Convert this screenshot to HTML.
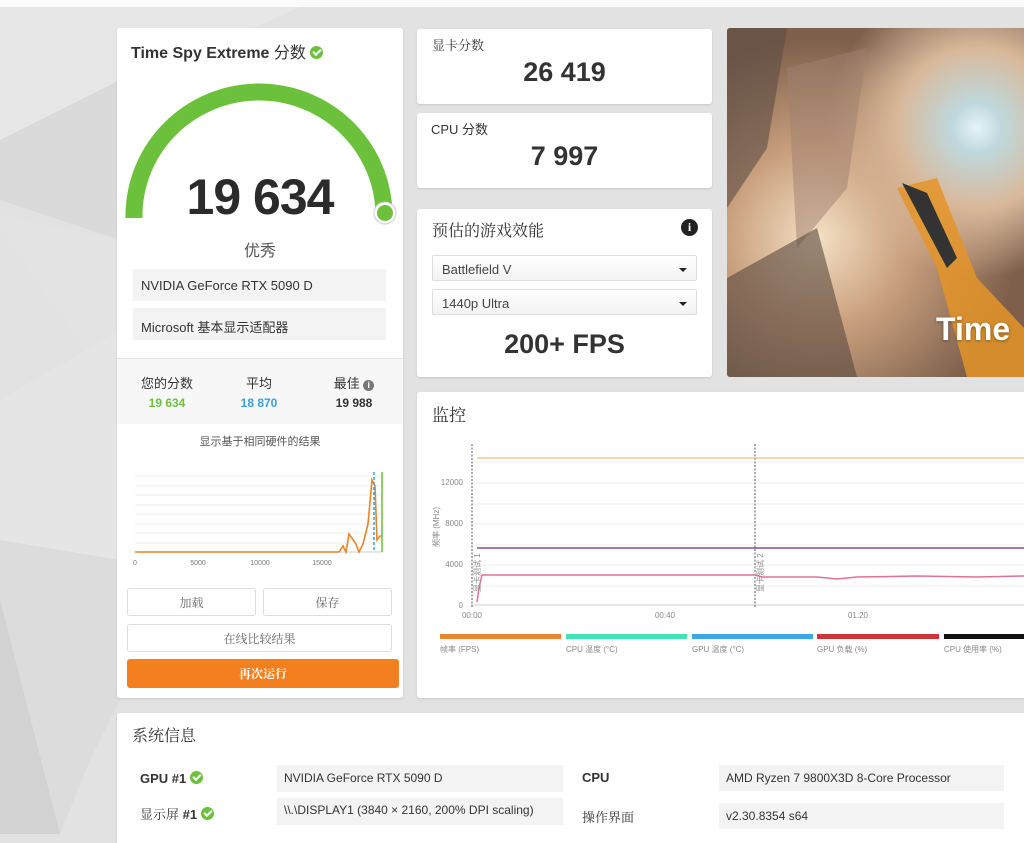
<!DOCTYPE html>
<html><head><meta charset="utf-8"><style>
*{margin:0;padding:0;box-sizing:border-box}
body{width:1024px;height:834px;overflow:hidden;background:#e2e2e2;font-family:"Liberation Sans","Noto Sans CJK SC",sans-serif;color:#333;position:relative}
.card{position:absolute;background:#fff;border-radius:3px;box-shadow:0 1px 2px rgba(0,0,0,.12)}
.abs{position:absolute}
.gray{background:#f3f3f3}
.btn{position:absolute;border:1px solid #ddd;border-radius:3px;background:#fff;text-align:center;font-size:12px;color:#666;font-family:"Noto Serif CJK SC",serif}
.sel{position:absolute;left:15px;width:265px;height:26px;border:1px solid #ddd;border-radius:2px;background:linear-gradient(#fff,#f2f2f2);font-size:13px;color:#444;padding:6px 0 0 9px}
.sel:after{content:"";position:absolute;right:9px;top:12px;border:4px solid transparent;border-top:4px solid #222;border-bottom:0}
.chk{display:inline-block;width:13px;height:13px;border-radius:50%;background:#6cc13c;vertical-align:-1px;position:relative}
.chk:after{content:"";position:absolute;left:3px;top:3px;width:6px;height:3px;border-left:2px solid #fff;border-bottom:2px solid #fff;transform:rotate(-45deg)}
</style></head><body>
<svg class="abs" style="left:0;top:0" width="1024" height="834">
<rect width="1024" height="7" fill="#fbfbfb"/>
<polygon points="0,7 300,7 0,140" fill="#e7e7e7"/>
<polygon points="0,140 120,80 120,240 0,200" fill="#dadada"/>
<polygon points="0,215 120,240 120,400 0,230" fill="#e3e3e3"/>
<polygon points="0,400 120,330 120,560 0,540" fill="#e5e5e5"/>
<polygon points="0,540 120,560 120,834 0,834" fill="#dcdcdc"/>
<polygon points="0,600 60,834 0,834" fill="#d2d2d2"/>
<polygon points="60,834 90,760 120,700 120,834" fill="#e2e2e2"/>
</svg>

<!-- Score card -->
<div class="card" style="left:117px;top:28px;width:286px;height:670px">
  <div class="abs" style="left:14px;top:11px;font-size:16px;font-weight:bold;color:#333">Time Spy Extreme <span style="font-weight:normal">分数</span> <span class="chk"></span></div>
  <svg class="abs" style="left:0;top:0" width="286" height="200">
    <path d="M17 190 A125 124 0 0 1 267 186" fill="none" stroke="#6cc13c" stroke-width="17"/>
    <circle cx="268" cy="185" r="11" fill="#fff" stroke="#ccc"/>
    <circle cx="268" cy="185" r="8" fill="#6cc13c"/>
  </svg>
  <div class="abs" style="left:0;width:286px;top:140px;text-align:center;font-size:50px;font-weight:bold;color:#2b2b2b;letter-spacing:-1px">19 634</div>
  <div class="abs" style="left:0;width:286px;top:209px;text-align:center;font-size:16px;color:#555">优秀</div>
  <div class="abs gray" style="left:16px;top:241px;width:253px;height:32px;font-size:13px;padding:9px 8px">NVIDIA GeForce RTX 5090 D</div>
  <div class="abs gray" style="left:16px;top:280px;width:253px;height:32px;font-size:13px;padding:9px 8px">Microsoft 基本显示适配器</div>
  <div class="abs" style="left:0;top:330px;width:286px;height:66px;background:#f7f7f7;border-top:1px solid #e5e5e5">
    <div class="abs" style="left:0;width:100px;top:14px;text-align:center;font-size:13px">您的分数<br><b style="color:#6cc13c;font-size:12px;line-height:22px">19 634</b></div>
    <div class="abs" style="left:92px;width:100px;top:14px;text-align:center;font-size:13px">平均<br><b style="color:#3aa0d8;font-size:12px;line-height:22px">18 870</b></div>
    <div class="abs" style="left:187px;width:100px;top:14px;text-align:center;font-size:13px">最佳 <span style="display:inline-block;width:11px;height:11px;border-radius:50%;background:#777;color:#fff;font-size:9px;line-height:11px;font-weight:bold">i</span><br><b style="font-size:12px;line-height:22px">19 988</b></div>
  </div>
  <div class="abs" style="left:0;width:286px;top:405px;text-align:center;font-size:11px;color:#555">显示基于相同硬件的结果</div>
  <svg class="abs" style="left:0;top:430px" width="286" height="120">
    <g stroke="#eee"><line x1="18" y1="18" x2="265" y2="18"/><line x1="18" y1="28" x2="265" y2="28"/><line x1="18" y1="37" x2="265" y2="37"/><line x1="18" y1="47" x2="265" y2="47"/><line x1="18" y1="56" x2="265" y2="56"/><line x1="18" y1="66" x2="265" y2="66"/><line x1="18" y1="75" x2="265" y2="75"/><line x1="18" y1="85" x2="265" y2="85"/></g>
    <line x1="18" y1="94" x2="265" y2="94" stroke="#ccc"/>
    <polyline points="18,94 222,94 226,88 229,94 232,76 239,86 242,94 246,86 251,66 255,22 258,28 260,82 263,78 265,78" fill="none" stroke="#e8842b" stroke-width="1.6"/>
    <line x1="257" y1="14" x2="257" y2="94" stroke="#3aa0d8" stroke-width="1.5" stroke-dasharray="3,2"/>
    <line x1="265" y1="14" x2="265" y2="94" stroke="#6cc13c" stroke-width="1.5"/>
    <g font-size="7" fill="#777" text-anchor="middle"><text x="18" y="107">0</text><text x="81" y="107">5000</text><text x="143" y="107">10000</text><text x="205" y="107">15000</text></g>
  </svg>
  <div class="btn" style="left:10px;top:560px;width:129px;height:28px;line-height:27px">加载</div>
  <div class="btn" style="left:146px;top:560px;width:129px;height:28px;line-height:27px">保存</div>
  <div class="btn" style="left:10px;top:596px;width:265px;height:28px;line-height:27px">在线比较结果</div>
  <div class="abs" style="left:10px;top:631px;width:272px;height:29px;background:#f47f1f;border-radius:3px;color:#fff;text-align:center;line-height:29px;font-size:12px;font-weight:bold;font-family:'Noto Serif CJK SC',serif">再次运行</div>
</div>

<!-- GPU score -->
<div class="card" style="left:417px;top:29px;width:295px;height:75px">
  <div class="abs" style="left:15px;top:6px;font-size:13px;font-family:'Noto Serif CJK SC',serif">显卡分数</div>
  <div class="abs" style="left:0;width:295px;top:28px;text-align:center;font-size:27px;font-weight:bold;color:#333">26 419</div>
</div>
<div class="card" style="left:417px;top:113px;width:295px;height:75px">
  <div class="abs" style="left:14px;top:6px;font-size:13px">CPU 分数</div>
  <div class="abs" style="left:0;width:295px;top:28px;text-align:center;font-size:27px;font-weight:bold;color:#333">7 997</div>
</div>
<div class="card" style="left:417px;top:209px;width:295px;height:168px">
  <div class="abs" style="left:15px;top:9px;font-size:16px;font-family:'Noto Serif CJK SC',serif">预估的游戏效能</div>
  <div class="abs" style="left:264px;top:10px;width:17px;height:17px;border-radius:50%;background:#222;color:#fff;font-size:12px;font-weight:bold;text-align:center;line-height:17px;font-family:'Liberation Serif',serif">i</div>
  <div class="sel" style="top:46px">Battlefield V</div>
  <div class="sel" style="top:80px">1440p Ultra</div>
  <div class="abs" style="left:0;width:295px;top:120px;text-align:center;font-size:27px;font-weight:bold;color:#333">200+ FPS</div>
</div>

<!-- Image -->
<div class="abs" style="left:727px;top:28px;width:297px;height:349px;border-radius:3px 0 0 3px;overflow:hidden;background:radial-gradient(circle at 250px 100px,#e6f4f6 0,#bfd8dc 25px,#d9b89a 80px,transparent 150px),radial-gradient(circle at 90px 210px,#f4e0c4 0,#c9a07e 90px,#7d5f4b 200px),#6b5446">
  <svg class="abs" style="left:0;top:0" width="297" height="349">
    <polygon points="0,0 60,0 40,120 0,180" fill="#5e4d45" opacity=".6"/>
    <polygon points="60,40 140,20 120,160 70,220" fill="#a08070" opacity=".5"/>
    <polygon points="0,250 90,200 130,349 0,349" fill="#5a4a40" opacity=".6"/>
    <polygon points="170,160 210,150 250,250 297,300 297,349 240,349 210,240" fill="#e49428" opacity=".85"/>
    <polygon points="175,155 200,165 230,230 220,240" fill="#333"/>
  </svg>
  <div class="abs" style="left:209px;top:283px;color:#fff;font-size:32px;font-weight:bold;text-shadow:0 1px 3px rgba(0,0,0,.4)">Time</div>
</div>

<!-- Monitor -->
<div class="card" style="left:417px;top:392px;width:607px;height:306px;border-radius:3px 0 0 3px">
  <div class="abs" style="left:15px;top:9px;font-size:17px;font-family:'Noto Serif CJK SC',serif">监控</div>
  <svg class="abs" style="left:0;top:0" width="607" height="306" font-family="Liberation Sans" font-size="8" fill="#888">
    <g stroke="#eee"><line x1="54" y1="70" x2="607" y2="70"/><line x1="54" y1="91" x2="607" y2="91"/><line x1="54" y1="112" x2="607" y2="112"/><line x1="54" y1="132" x2="607" y2="132"/><line x1="54" y1="153" x2="607" y2="153"/><line x1="54" y1="173" x2="607" y2="173"/><line x1="54" y1="194" x2="607" y2="194"/></g>
    <line x1="54" y1="213" x2="607" y2="213" stroke="#ccc"/>
    <text x="46" y="93" text-anchor="end">12000</text><text x="46" y="134" text-anchor="end">8000</text><text x="46" y="175" text-anchor="end">4000</text><text x="46" y="216" text-anchor="end">0</text>
    <text x="22" y="135" transform="rotate(-90 22 135)" text-anchor="middle">频率 (MHz)</text>
    <line x1="55" y1="52" x2="55" y2="215" stroke="#555" stroke-dasharray="2,1.5"/>
    <line x1="338" y1="52" x2="338" y2="215" stroke="#555" stroke-dasharray="2,1.5"/>
    <line x1="60" y1="66" x2="607" y2="66" stroke="#f0c98a" stroke-width="1.5"/>
    <line x1="60" y1="156" x2="607" y2="156" stroke="#7b4d9c" stroke-width="1.5"/>
    <polyline points="60,210 62,196 65,183 120,183 200,183 338,183 345,185 400,185 420,187 440,185 500,184 560,185 607,184" fill="none" stroke="#e0709a" stroke-width="1.5"/>
    <text x="58" y="205" transform="rotate(-90 58 200)" font-size="8">显卡测试 1</text>
    <text x="341" y="205" transform="rotate(-90 341 200)" font-size="8">显卡测试 2</text>
    <text x="55" y="226" text-anchor="middle">00:00</text><text x="248" y="226" text-anchor="middle">00:40</text><text x="441" y="226" text-anchor="middle">01:20</text>
    <rect x="23" y="242" width="121" height="5" fill="#e8842b"/>
    <rect x="149" y="242" width="121" height="5" fill="#3de5b5"/>
    <rect x="275" y="242" width="121" height="5" fill="#3aa8e8"/>
    <rect x="400" y="242" width="122" height="5" fill="#d03535"/>
    <rect x="527" y="242" width="80" height="5" fill="#111"/>
    <text x="23" y="260">帧率 (FPS)</text><text x="149" y="260">CPU 温度 (°C)</text><text x="275" y="260">GPU 温度 (°C)</text><text x="400" y="260">GPU 负载 (%)</text><text x="527" y="260">CPU 使用率 (%)</text>
  </svg>
</div>

<!-- System info -->
<div class="card" style="left:117px;top:713px;width:907px;height:130px;border-radius:3px 0 0 0">
  <div class="abs" style="left:15px;top:10px;font-size:16px;font-family:'Noto Serif CJK SC',serif">系统信息</div>
  <div class="abs" style="left:23px;top:58px;font-size:13px;font-weight:bold">GPU #1 <span class="chk"></span></div>
  <div class="abs" style="left:23px;top:91px;font-size:13px"><span style="font-family:'Noto Serif CJK SC',serif">显示屏</span> <b>#1</b> <span class="chk"></span></div>
  <div class="abs gray" style="left:160px;top:52px;width:286px;height:27px;font-size:12px;padding:6px 7px">NVIDIA GeForce RTX 5090 D</div>
  <div class="abs gray" style="left:160px;top:85px;width:286px;height:27px;font-size:12px;padding:5px 7px">\\.\DISPLAY1 (3840 × 2160, 200% DPI scaling)</div>
  <div class="abs" style="left:465px;top:57px;font-size:13px;font-weight:bold">CPU</div>
  <div class="abs" style="left:465px;top:94px;font-size:13px;font-family:'Noto Serif CJK SC',serif">操作界面</div>
  <div class="abs gray" style="left:602px;top:52px;width:285px;height:26px;font-size:12px;padding:6px 7px">AMD Ryzen 7 9800X3D 8-Core Processor</div>
  <div class="abs gray" style="left:602px;top:90px;width:285px;height:26px;font-size:12px;padding:6px 7px">v2.30.8354 s64</div>
</div>
</body></html>
